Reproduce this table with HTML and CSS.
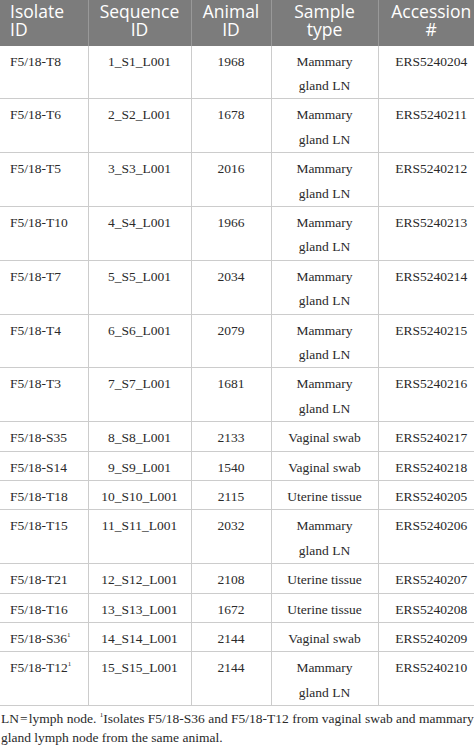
FILE: index.html
```html
<!DOCTYPE html>
<html>
<head>
<meta charset="utf-8">
<link rel="stylesheet" href="styles.css">
</head>
<body>
<div class="page">
<table class="data">
  <colgroup>
    <col class="c1"><col class="c2"><col class="c3"><col class="c4"><col class="c5">
  </colgroup>
  <thead>
    <tr>
      <th class="left">Isolate<br>ID</th>
      <th>Sequence<br>ID</th>
      <th>Animal<br>ID</th>
      <th>Sample<br>type</th>
      <th>Accession<br>#</th>
    </tr>
  </thead>
  <tbody>
    <tr><td class="left">F5/18-T8</td><td>1_S1_L001</td><td>1968</td><td>Mammary<br>gland LN</td><td>ERS5240204</td></tr>
    <tr><td class="left">F5/18-T6</td><td>2_S2_L001</td><td>1678</td><td>Mammary<br>gland LN</td><td>ERS5240211</td></tr>
    <tr><td class="left">F5/18-T5</td><td>3_S3_L001</td><td>2016</td><td>Mammary<br>gland LN</td><td>ERS5240212</td></tr>
    <tr><td class="left">F5/18-T10</td><td>4_S4_L001</td><td>1966</td><td>Mammary<br>gland LN</td><td>ERS5240213</td></tr>
    <tr><td class="left">F5/18-T7</td><td>5_S5_L001</td><td>2034</td><td>Mammary<br>gland LN</td><td>ERS5240214</td></tr>
    <tr><td class="left">F5/18-T4</td><td>6_S6_L001</td><td>2079</td><td>Mammary<br>gland LN</td><td>ERS5240215</td></tr>
    <tr><td class="left">F5/18-T3</td><td>7_S7_L001</td><td>1681</td><td>Mammary<br>gland LN</td><td>ERS5240216</td></tr>
    <tr><td class="left">F5/18-S35</td><td>8_S8_L001</td><td>2133</td><td>Vaginal swab</td><td>ERS5240217</td></tr>
    <tr><td class="left">F5/18-S14</td><td>9_S9_L001</td><td>1540</td><td>Vaginal swab</td><td>ERS5240218</td></tr>
    <tr><td class="left">F5/18-T18</td><td>10_S10_L001</td><td>2115</td><td>Uterine tissue</td><td>ERS5240205</td></tr>
    <tr><td class="left">F5/18-T15</td><td>11_S11_L001</td><td>2032</td><td>Mammary<br>gland LN</td><td>ERS5240206</td></tr>
    <tr><td class="left">F5/18-T21</td><td>12_S12_L001</td><td>2108</td><td>Uterine tissue</td><td>ERS5240207</td></tr>
    <tr><td class="left">F5/18-T16</td><td>13_S13_L001</td><td>1672</td><td>Uterine tissue</td><td>ERS5240208</td></tr>
    <tr><td class="left">F5/18-S36<sup class="sup">1</sup></td><td>14_S14_L001</td><td>2144</td><td>Vaginal swab</td><td>ERS5240209</td></tr>
    <tr><td class="left">F5/18-T12<sup class="sup">1</sup></td><td>15_S15_L001</td><td>2144</td><td>Mammary<br>gland LN</td><td>ERS5240210</td></tr>
  </tbody>
</table>
<p class="note">LN&#8202;=&#8202;lymph node. <sup class="sup">1</sup>Isolates F5/18-S36 and F5/18-T12 from vaginal swab and mammary gland lymph node from the same animal.</p>
</div>
</body>
</html>
```

FILE: styles.css
```css
html, body {
  margin: 0;
  padding: 0;
  background: #ffffff;
}
.page {
  width: 474px;
  height: 748px;
  overflow: hidden;
  font-family: "Liberation Serif", "DejaVu Serif", serif;
  color: #2a2a2a;
}
.data {
  width: 484px;
  table-layout: fixed;
  border-collapse: collapse;
}
.c1 { width: 88px; }
.c2 { width: 103px; }
.c3 { width: 80px; }
.c4 { width: 107px; }
.c5 { width: 106px; }
.data th {
  background: #7c7c7c;
  color: #ffffff;
  font-family: "Open Sans", "Liberation Sans", sans-serif;
  font-weight: 400;
  font-size: 17.5px;
  line-height: 18px;
  padding: 1.5px 4px 8px;
  text-align: center;
  vertical-align: top;
  border-left: 1px solid #999999;
}
.data td {
  font-family: "Liberation Serif", "DejaVu Serif", serif;
  font-size: 13.5px;
  line-height: 24.4px;
  padding: 4px 4px 0;
  text-align: center;
  vertical-align: top;
  border-left: 1px solid #cccccc;
  border-bottom: 1px solid #cccccc;
}
.data th:first-child,
.data td:first-child {
  border-left: none;
}
.data th.left,
.data td.left {
  text-align: left;
  padding-left: 10px;
}
.sup {
  font-size: 7px;
  line-height: 0;
  vertical-align: 6px;
}
.note {
  font-family: "Liberation Serif", "DejaVu Serif", serif;
  margin: 3px 0 0;
  padding-left: 1px;
  font-size: 13.5px;
  line-height: 19px;
}
```
